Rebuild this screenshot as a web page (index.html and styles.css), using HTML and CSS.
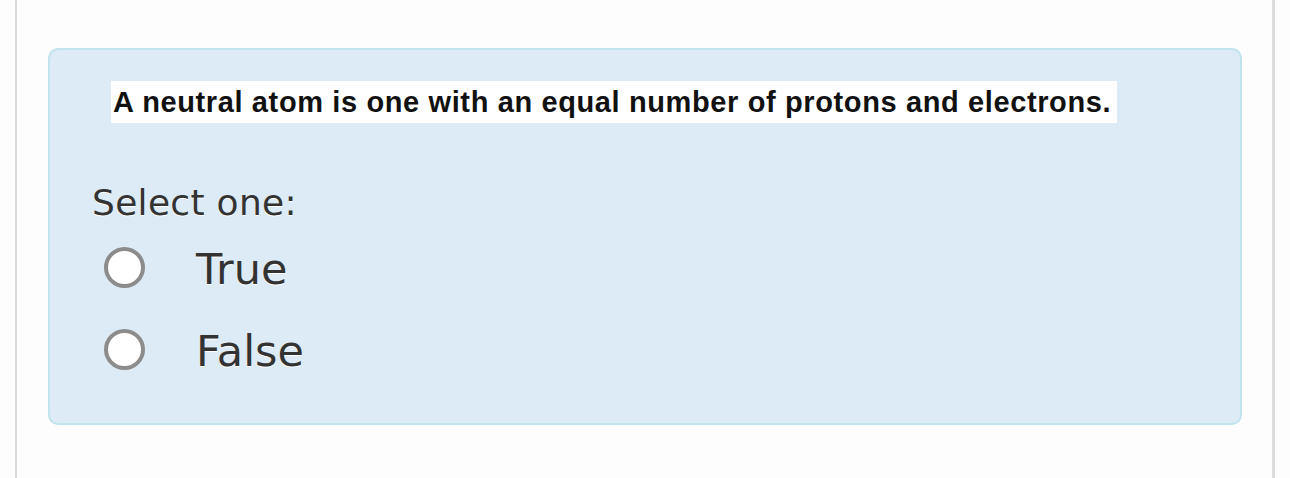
FILE: index.html
```html
<!DOCTYPE html>
<html>
<head>
<meta charset="utf-8">
<link rel="stylesheet" href="styles.css">
</head>
<body>
<div class="page">
  <div class="que">
    <div class="qtext"><span class="hl">A neutral atom is one with an equal number of protons and electrons.</span></div>
    <div class="prompt">Select one:</div>
    <div class="answer">
      <label class="opt"><span class="radio"></span><span class="lbl">True</span></label>
      <label class="opt"><span class="radio"></span><span class="lbl">False</span></label>
    </div>
  </div>
</div>
</body>
</html>
```
FILE: styles.css
```css
html, body {
  margin: 0;
  padding: 0;
  background: #fdfdfd;
  height: 478px;
  overflow: hidden;
}
.page {
  margin: 0 15px;
  height: 478px;
  border-left: 2px solid #dcdcdc;
  border-right: 3px solid #dcdcdc;
  padding: 48px 30px 0 31px;
  box-sizing: border-box;
}
.que {
  background: #dcebf5;
  border: 2px solid #c0e3ee;
  border-radius: 10px;
  height: 377px;
  box-sizing: border-box;
  padding: 31px 42px 0 42px;
  font-family: "DejaVu Sans", Verdana, sans-serif;
  color: #333;
}
.qtext {
  padding-left: 19px;
  height: 42px;
}
.hl {
  display: inline-block;
  background: #fff;
  font-family: "Liberation Sans", Arial, sans-serif;
  font-weight: bold;
  font-size: 29px;
  letter-spacing: 0.62px;
  line-height: 42px;
  padding: 0 6px 0 2px;
  color: #111;
}
.prompt {
  margin-top: 60px;
  font-size: 36px;
  line-height: 40px;
  letter-spacing: 0.3px;
  text-shadow: 0 1px 0 #fff;
}
.answer {
  margin-top: 24px;
  display: flex;
  flex-direction: column;
  gap: 38px;
  padding-left: 12px;
}
.opt {
  display: flex;
  align-items: flex-start;
  height: 44px;
}
.radio {
  width: 33px;
  height: 33px;
  border: 4px solid #8c8c8c;
  border-radius: 50%;
  background: #fff;
  flex: none;
}
.lbl {
  margin-left: 51px;
  font-size: 43px;
  line-height: 44px;
  text-shadow: 0 1px 0 #fff;
}
```
